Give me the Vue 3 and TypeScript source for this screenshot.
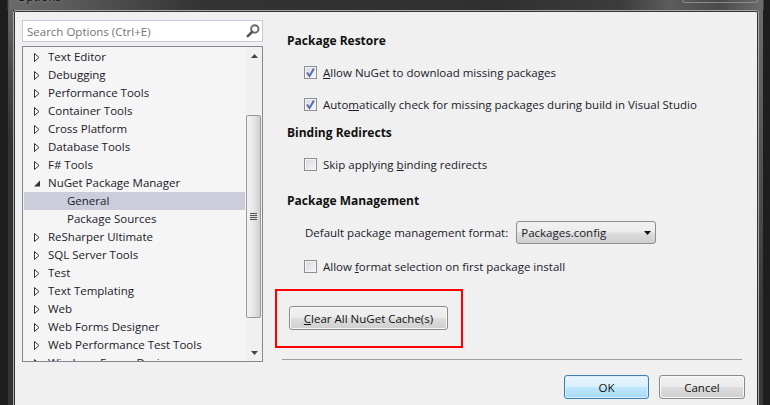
<script setup lang="ts">
interface Row { label: string; kind: 'closed' | 'open' | 'child'; selected?: boolean }
const rows: Row[] = [
  { label: 'Text Editor', kind: 'closed' },
  { label: 'Debugging', kind: 'closed' },
  { label: 'Performance Tools', kind: 'closed' },
  { label: 'Container Tools', kind: 'closed' },
  { label: 'Cross Platform', kind: 'closed' },
  { label: 'Database Tools', kind: 'closed' },
  { label: 'F# Tools', kind: 'closed' },
  { label: 'NuGet Package Manager', kind: 'open' },
  { label: 'General', kind: 'child', selected: true },
  { label: 'Package Sources', kind: 'child' },
  { label: 'ReSharper Ultimate', kind: 'closed' },
  { label: 'SQL Server Tools', kind: 'closed' },
  { label: 'Test', kind: 'closed' },
  { label: 'Text Templating', kind: 'closed' },
  { label: 'Web', kind: 'closed' },
  { label: 'Web Forms Designer', kind: 'closed' },
  { label: 'Web Performance Test Tools', kind: 'closed' },
  { label: 'Windows Forms Designer', kind: 'closed' },
]
</script>

<template>
  <div class="frame">
    <div class="titlebar">
      <span class="title">Options</span>
      <span class="caption-btns"></span>
    </div>
    <div class="client">
      <div class="top">
        <aside class="side">
          <div class="search">
            <span class="search-text">Search Options (Ctrl+E)</span>
            <svg class="search-icon" width="14" height="14" viewBox="0 0 14 14">
              <circle cx="8.8" cy="5" r="3.7" fill="none" stroke="#6a6a6a" stroke-width="2" />
              <path d="M6 8 L1.8 12.2" stroke="#555" stroke-width="2.6" stroke-linecap="round" />
            </svg>
          </div>
          <div class="tree">
            <div class="tree-rows">
              <div v-for="r in rows" :key="r.label" class="row" :class="{ sel: r.selected, child: r.kind === 'child' }">
                <svg v-if="r.kind === 'closed'" class="arrow" width="6" height="9" viewBox="0 0 6 9">
                  <path d="M0.5 0.5 L5 4.5 L0.5 8.5 Z" fill="#fff" stroke="#333" stroke-width="1" />
                </svg>
                <svg v-else-if="r.kind === 'open'" class="arrow" width="6" height="9" viewBox="0 0 6 9">
                  <path d="M0 7.5 L6 7.5 L6 1.5 Z" fill="#333" />
                </svg>
                <span>{{ r.label }}</span>
              </div>
            </div>
            <div class="scroll">
              <div class="scroll-btn"><svg width="7" height="4" viewBox="0 0 7 4"><path d="M0 4 L7 4 L3.5 0 Z" fill="#444" /></svg></div>
              <div class="scroll-track">
                <div class="thumb"><span class="grip"></span></div>
              </div>
              <div class="scroll-btn"><svg width="7" height="4" viewBox="0 0 7 4"><path d="M0 0 L7 0 L3.5 4 Z" fill="#444" /></svg></div>
            </div>
          </div>
        </aside>
        <main class="panel">
          <h3 class="heading first">Package Restore</h3>
          <label class="check gap-a"><span class="box on"><svg width="11" height="11" viewBox="0 0 11 11"><path d="M2 5.5 L4.5 9 L9 1.5" fill="none" stroke="#5468a8" stroke-width="1.9" /></svg></span><span><u>A</u>llow NuGet to download missing packages</span></label>
          <label class="check gap-b"><span class="box on"><svg width="11" height="11" viewBox="0 0 11 11"><path d="M2 5.5 L4.5 9 L9 1.5" fill="none" stroke="#5468a8" stroke-width="1.9" /></svg></span><span>Auto<u>m</u>atically check for missing packages during build in Visual Studio</span></label>
          <h3 class="heading h2">Binding Redirects</h3>
          <label class="check gap-c"><span class="box"></span><span>Skip applying <u>b</u>inding redirects</span></label>
          <h3 class="heading h3">Package Management</h3>
          <div class="format">
            <span>Default package management format:</span>
            <div class="combo"><span>Packages.config</span><svg width="7" height="4" viewBox="0 0 7 4"><path d="M0 0 L7 0 L3.5 4 Z" fill="#111" /></svg></div>
          </div>
          <label class="check gap-d"><span class="box"></span><span>Allow <u>f</u>ormat selection on first package install</span></label>
          <div class="highlight">
            <button class="btn clear" type="button"><u>C</u>lear All NuGet Cache(s)</button>
          </div>
        </main>
      </div>
      <div class="footer">
        <div class="sep"></div>
        <div class="actions">
          <button class="btn ok" type="button">OK</button>
          <button class="btn cancel" type="button">Cancel</button>
        </div>
      </div>
    </div>
  </div>
</template>

<style>
html, body { margin: 0; background: #222; overflow: hidden; }
</style>

<style scoped>
.frame {
  width: 770px;
  height: 405px;
  box-sizing: border-box;
  padding: 0 12px 0 14px;
  background:
    linear-gradient(180deg, #6a6a6a 0, #4a4a4a 70px, #333 140px, #333 100%) 8px 0 / 5px 100% no-repeat,
    linear-gradient(180deg, #6e6e6e 0, #5a5a5a 120px, #3a3a3a 300px) 758px 0 / 5px 100% no-repeat,
    #1e1e1e;
  display: flex;
  flex-direction: column;
  font-family: "Open Sans", "Noto Sans", sans-serif;
  font-size: 11.5px;
  color: #1a1a2a;
  overflow: hidden;
}
.titlebar {
  height: 10px;
  flex: none;
  display: flex;
  justify-content: space-between;
  background: linear-gradient(90deg, #1e1e1e 0, #1e1e1e 7px, #6a6a6a 9px, #5a5a5a 70px, #333 200px, #303030 500px, #3c3c3c 620px, #5c5c5c 670px, #4a4a4a 720px, #6a6a6a 760px, #6a6a6a 763px, #1e1e1e 764px);
  margin: 0 -12px 0 -14px;
  padding: 0 12px 0 17px;
  overflow: hidden;
}
.title {
  font-size: 12px;
  line-height: 12px;
  margin-top: -9px;
  color: #111;
  text-shadow: 0 0 4px rgba(255, 255, 255, 0.4);
}
.caption-btns {
  width: 74px;
  height: 2px;
  border: 1px solid #8a8a8a;
  border-top: 0;
  border-radius: 0 0 3px 3px;
}
.client {
  flex: 1;
  min-height: 0;
  display: flex;
  flex-direction: column;
  background: #f0f0f0;
  border: 1px solid #333;
  border-bottom: 0;
  margin-top: 1px;
  box-shadow: 0 0 0 1px #a8a8a8;
  border-radius: 2px 2px 0 0;
}
.top {
  display: flex;
  height: 347px;
  flex: none;
}
.side {
  width: 248px;
  flex: none;
  padding: 8px 0 0 7px;
  box-sizing: border-box;
}
.search {
  width: 241px;
  height: 22px;
  box-sizing: border-box;
  border: 1px solid #c6c9dc;
  background: #fff;
  display: flex;
  align-items: center;
  justify-content: space-between;
  padding: 0 2px 0 4px;
  color: #757575;
}
.tree {
  margin-top: 4px;
  width: 241px;
  height: 316px;
  box-sizing: border-box;
  border: 1px solid #828790;
  background: #f5f5f5;
  display: flex;
}
.tree-rows {
  width: 222px;
  margin-left: 1px;
  height: 313px;
  padding-top: 1px;
  overflow: hidden;
}
.row {
  height: 18px;
  line-height: 18px;
  display: flex;
  align-items: center;
  padding-left: 10px;
  gap: 8px;
  white-space: nowrap;
}
.row .arrow { flex: none; }
.row.child { padding-left: 43px; }
.row.sel { background: #cbcdda; }
.scroll {
  width: 16px;
  flex: none;
  margin-left: 1px;
  background: #f0f0f0;
  display: flex;
  flex-direction: column;
}
.scroll-btn {
  height: 17px;
  flex: none;
  display: flex;
  align-items: center;
  justify-content: center;
}
.scroll-track {
  flex: 1;
  padding: 51px 1px 26px 0;
  display: flex;
}
.thumb {
  flex: 1;
  background: linear-gradient(90deg, #f2f2f2, #e6e6e6 50%, #cfcfcf);
  border: 1px solid #999;
  border-radius: 2px;
  display: flex;
  align-items: center;
  justify-content: center;
}
.grip {
  width: 7px;
  height: 7px;
  background: repeating-linear-gradient(180deg, #555 0, #555 1px, #ddd 1px, #ddd 2px);
}
.panel {
  flex: 1;
  min-width: 0;
  padding-left: 24px;
  box-sizing: border-box;
}
.heading {
  margin: 0;
  font-size: 12px;
  line-height: 16px;
  font-weight: 700;
  color: #111;
}
.first { margin-top: 21px; }
.h2 { margin-top: 12px; }
.h3 { margin-top: 20px; }
.check {
  display: flex;
  align-items: center;
  height: 18px;
  padding-left: 17px;
  gap: 6px;
  white-space: nowrap;
}
.gap-a { margin-top: 14px; }
.gap-b { margin-top: 14px; }
.gap-c { margin-top: 14px; }
.gap-d { margin-top: 13px; }
.box {
  width: 13px;
  height: 13px;
  box-sizing: border-box;
  border: 1px solid #8e8f8f;
  box-shadow: inset 0 0 0 1px #f4f4f4;
  background: linear-gradient(135deg, #d6d9e2, #f6f6f6);
  display: flex;
  align-items: center;
  justify-content: center;
  flex: none;
}
.format {
  display: flex;
  align-items: center;
  gap: 8px;
  padding-left: 18px;
  margin-top: 12px;
  height: 23px;
  white-space: nowrap;
}
.combo {
  width: 140px;
  height: 23px;
  box-sizing: border-box;
  border: 1px solid #8e8f8f;
  border-radius: 3px;
  background: linear-gradient(180deg, #f2f2f2, #ebebeb 48%, #dddddd 52%, #cfcfcf);
  display: flex;
  align-items: center;
  justify-content: space-between;
  padding: 0 4px 0 4px;
}
.highlight {
  margin-top: 14px;
  margin-left: -12px;
  width: 188px;
  height: 59px;
  box-sizing: border-box;
  border: 2px solid #f00;
  padding: 15px 0 0 12px;
}
.btn {
  font-family: inherit;
  font-size: 11.5px;
  color: #111;
  border: 1px solid #8a8a8a;
  border-radius: 3px;
  background: linear-gradient(180deg, #f2f2f2, #ebebeb 48%, #dddddd 52%, #cfcfcf);
  box-shadow: inset 0 0 0 1px #f8f8f8;
  padding: 0;
  height: 24px;
  display: block;
}
.clear { width: 159px; }
.footer {
  flex: 1;
  padding: 0;
  display: flex;
  flex-direction: column;
}
.sep {
  height: 1px;
  margin: 0 15px 0 267px;
  background: #a0a0a0;
}
.actions {
  display: flex;
  justify-content: flex-end;
  gap: 10px;
  padding: 15px 12px 0 0;
}
.ok {
  width: 85px;
  border-color: #3c7fb1;
  background: linear-gradient(180deg, #eaf6fd, #d9f0fc 48%, #bee6fd 52%, #a7d9f5);
  box-shadow: inset 0 0 0 1px #d8f0fb;
}
.cancel { width: 86px; }
u { text-underline-offset: 1px; }
</style>
